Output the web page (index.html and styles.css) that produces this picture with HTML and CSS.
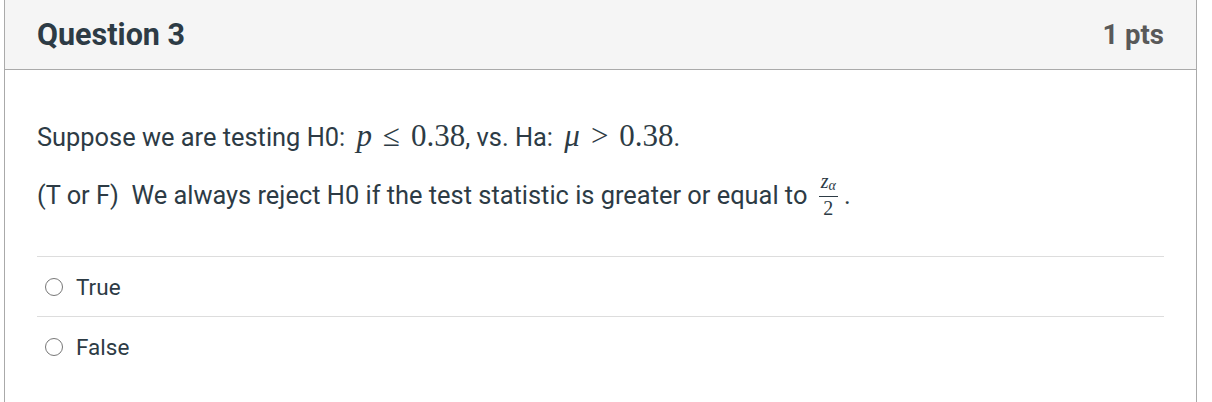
FILE: index.html
```
<!DOCTYPE html>
<html>
<head>
<meta charset="utf-8">
<link rel="stylesheet" href="styles.css">
</head>
<body>
<div class="card">
  <div class="header">
    <h2 class="title">Question 3</h2>
    <div class="pts">1 pts</div>
  </div>
  <div class="content">
    <p class="q">Suppose we are testing H0: <span class="m"><i>p</i><span class="op">≤</span>0.38</span>, vs. Ha: <span class="m"><i>μ</i><span class="op">&gt;</span>0.38</span>.</p>
    <p class="q">(T or F)&nbsp; We always reject H0 if the test statistic is greater or equal to <span class="frac"><span class="num"><i>z</i><sub><i>α</i></sub></span><span class="den">2</span></span>.</p>
    <div class="answers">
      <label class="answer"><span class="radio"></span><span>True</span></label>
      <label class="answer"><span class="radio"></span><span>False</span></label>
    </div>
  </div>
</div>
</body>
</html>
```
FILE: styles.css
```
html, body { margin: 0; padding: 0; background: #fff; }
body { font-family: Roboto, "Liberation Sans", sans-serif; color: #2d3b45; }
.card {
  margin-left: 4px;
  width: 1191px;
  height: 402px;
  border-left: 1px solid #aaaaaa;
  border-right: 1px solid #aaaaaa;
  box-sizing: content-box;
}
.header {
  height: 69px;
  background: #f5f5f5;
  border-bottom: 1px solid #aaaaaa;
  display: flex;
  align-items: center;
  justify-content: space-between;
  padding: 0 32px 0 32px;
}
.title { margin: 0; font-size: 30.5px; font-weight: 700; color: #2d3b45; }
.pts { font-size: 27.5px; font-weight: 700; color: #595959; }
.content { padding: 48px 32px 0 32px; }
.q { margin: 0 0 20px 0; font-size: 25.4px; line-height: 36px; }
.m { font-family: "Liberation Serif", "DejaVu Serif", serif; font-size: 31px; padding: 0 0 0 5px; }
.m i { font-style: italic; }
.op { margin: 0 11px; }
.frac {
  display: inline-flex;
  flex-direction: column;
  align-items: center;
  vertical-align: middle;
  font-family: "Liberation Serif", serif;
  font-size: 20px;
  line-height: 18px;
  margin: 0 6px 0 5px;
  position: relative;
  top: -3px;
}
.num { border-bottom: 1px solid #2d3b45; padding: 0 2px 1px; }
.num sub { font-size: 14px; vertical-align: -2px; }
.den { padding-top: 2px; }
.answers { margin-top: 36px; }
.answer {
  display: flex;
  align-items: center;
  height: 59px;
  border-top: 1px solid #dddddd;
  font-size: 22.5px;
  gap: 13px;
  padding-left: 8px;
}
.radio {
  width: 16px;
  height: 16px;
  border: 1.5px solid #777;
  border-radius: 50%;
  box-sizing: content-box;
}
```
